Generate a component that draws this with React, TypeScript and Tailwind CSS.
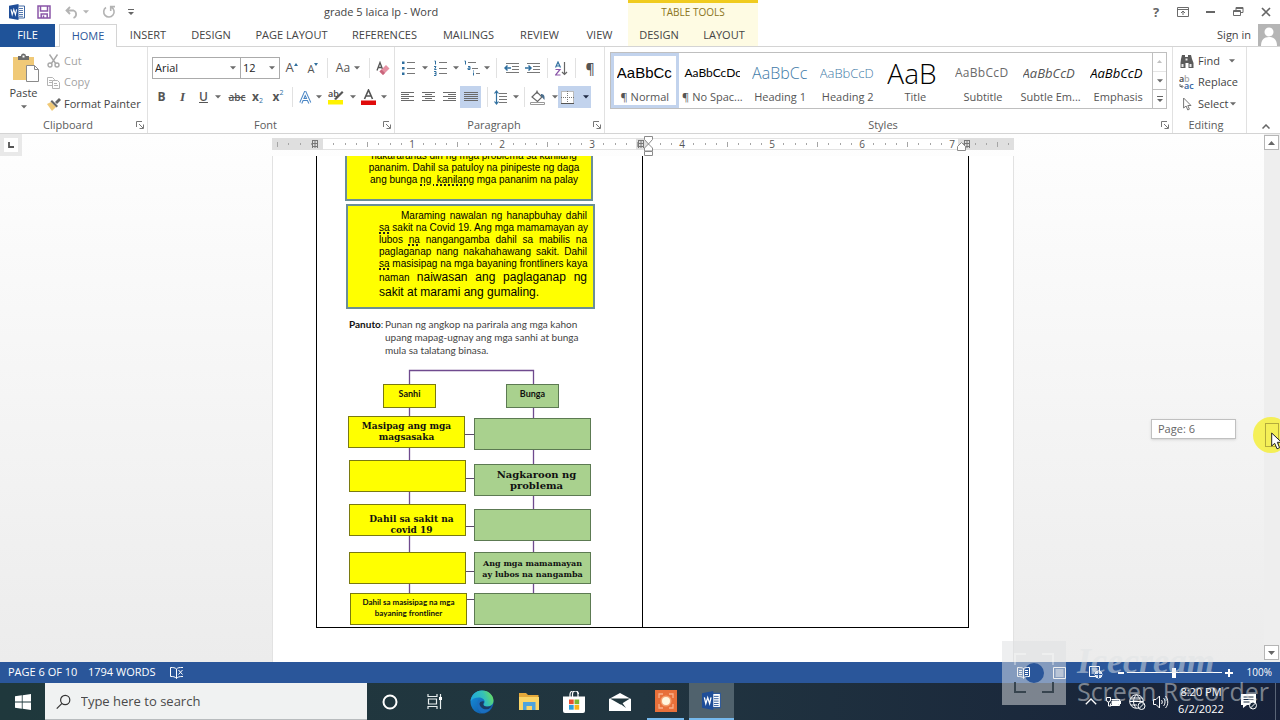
import React from "react";

const UI = "font-['Open_Sans','Noto_Sans',sans-serif]";

function Caret({ dark = false }: { dark?: boolean }) {
  return (
    <svg width="6" height="4" viewBox="0 0 6 4" aria-hidden="true" className="shrink-0">
      <path d="M0 0.3h6L3 3.6z" fill={dark ? "#1f2a44" : "#6b6b6b"} />
    </svg>
  );
}

function Tool({ label, w, children, on = false }: { label: string; w: string; children: React.ReactNode; on?: boolean }) {
  return (
    <button
      type="button"
      aria-label={label}
      className={`flex h-[22px] shrink-0 items-center justify-center text-[#555] ${w} ${on ? "bg-[#c2d3ed]" : ""}`}
    >
      {children}
    </button>
  );
}

function Sep({ w = "w-3" }: { w?: string }) {
  return (
    <span className={`flex h-5 shrink-0 justify-center ${w}`}>
      <span className="w-px bg-[#e1e1e1]" />
    </span>
  );
}

function Group({ title, w, launcher = true, children }: { title: string; w: string; launcher?: boolean; children: React.ReactNode }) {
  return (
    <section aria-label={title} className={`flex flex-col border-r border-[#e1e1e1] ${w}`}>
      <div className="min-h-0 flex-1">{children}</div>
      <div className="flex h-4 items-center pr-[3px]">
        <span className={`flex-1 text-center text-[11px] text-[#5c5c5c] ${launcher ? "" : "pr-1"}`}>{title}</span>
        {launcher && (
          <button type="button" aria-label={`${title} settings`}>
            <svg width="8" height="8" viewBox="0 0 8 8" fill="none" stroke="#777">
              <path d="M0.5 6V0.5H6M3 3l4 4M7.5 3.5v4h-4" />
            </svg>
          </button>
        )}
      </div>
    </section>
  );
}

function Lines({ rows }: { rows: [number, number][] }) {
  return (
    <svg width="14" height="12" viewBox="0 0 14 12" stroke="#6a6a6a" strokeWidth="1">
      {rows.map(([a, b], i) => (
        <path key={i} d={`M${a} ${1.5 + i * 2}H${b}`} />
      ))}
    </svg>
  );
}

function WordLogo({ size }: { size: number }) {
  return (
    <svg width={size} height={size} viewBox="0 0 16 16" aria-hidden="true">
      <path d="M8 2h7.5v12H8z" fill="#fff" stroke="#2b579a" strokeWidth="0.9" />
      <path d="M10 4.5h4M10 6.5h4M10 8.5h4M10 10.5h4M10 12.3h4" stroke="#2b579a" strokeWidth="0.8" />
      <path d="M0 1.8 9.5 0v16L0 14.2z" fill="#1f4e99" />
      <path d="M2 5.4 3.2 10.6 4.8 5.6 6.4 10.6 7.6 5.4" fill="none" stroke="#fff" strokeWidth="1.1" />
    </svg>
  );
}

const tabs: [string, string][] = [
  ["INSERT", "w-[62px]"],
  ["DESIGN", "w-[64px]"],
  ["PAGE LAYOUT", "w-[97px]"],
  ["REFERENCES", "w-[89px]"],
  ["MAILINGS", "w-[79px]"],
  ["REVIEW", "w-[63px]"],
  ["VIEW", "w-[57px]"],
];

function TitleBar() {
  return (
    <div className="flex h-6 items-stretch">
      <div className="flex w-[324px] items-center pl-[9px]">
        <WordLogo size={16} />
        <button type="button" aria-label="Save" className="ml-3">
          <svg width="14" height="14" viewBox="0 0 14 14" fill="none" stroke="#8a55a8" strokeWidth="1.5">
            <path d="M1 1h12v12H1zM3.5 1v5h7V1M4.2 13V9h6v4M6.5 10.500v2" />
          </svg>
        </button>
        <button type="button" aria-label="Undo" className="ml-[14px] flex items-center gap-1">
          <svg width="14" height="13" viewBox="0 0 14 13" fill="none" stroke="#b3b3b3" strokeWidth="1.8">
            <path d="M5 1 1.500 4.500 5 8M2 4.500h6.500a4 4 0 0 1 0 7.500" />
          </svg>
          <span className="opacity-50"><Caret /></span>
        </button>
        <button type="button" aria-label="Repeat" className="ml-[13px]">
          <svg width="14" height="14" viewBox="0 0 14 14" fill="none" stroke="#b3b3b3" strokeWidth="1.6">
            <path d="M4 2.500A5.200 5.200 0 1 0 9.500 2.300M8.700 6V1.600h4.300" />
          </svg>
        </button>
        <button type="button" aria-label="Customize Quick Access Toolbar" className="ml-3">
          <svg width="6" height="7" viewBox="0 0 6 7" fill="#666">
            <path d="M0 0h6v1H0zM0 3h6L3 6z" />
          </svg>
        </button>
      </div>
      <h1 className="w-[304px] self-center text-[11px] text-[#444]">grade 5 laica lp - Word</h1>
      <div className="w-[130px] border-t-[3px] border-[#f0cb1f] bg-[#fefbe3] pt-px text-center text-[10px] leading-4 text-[#8a7420]">
        TABLE TOOLS
      </div>
      <div className="flex flex-1 items-center justify-end pr-[9px] text-[#666]">
        <button type="button" aria-label="Help" className="w-5 text-[13px] font-bold leading-4">?</button>
        <button type="button" aria-label="Ribbon Display Options" className="ml-[11px]">
          <svg width="12" height="10" viewBox="0 0 12 10" fill="none" stroke="#6b6b6b">
            <path d="M0.500 0.500h11v9h-11zM0.500 2.500h11M6 8V4.500M4 6l2-2 2 2" />
          </svg>
        </button>
        <button type="button" aria-label="Minimize" className="ml-[17px] h-[2px] w-[9px] bg-[#666]" />
        <button type="button" aria-label="Restore Down" className="ml-[18px]">
          <svg width="11" height="10" viewBox="0 0 11 10" fill="none" stroke="#6b6b6b">
            <path d="M0.500 3.500h7v5h-7zM0.500 4.500h7M3 3V0.500h7v5H8M3 1.500h7" />
          </svg>
        </button>
        <button type="button" aria-label="Close" className="ml-[17px]">
          <svg width="10" height="10" viewBox="0 0 10 10" fill="none" stroke="#666" strokeWidth="1.7">
            <path d="M1 1l8 8M9 1 1 9" />
          </svg>
        </button>
      </div>
    </div>
  );
}

function TabBar() {
  return (
    <nav aria-label="Ribbon tabs" className="flex h-[23px] items-stretch text-[11px] text-[#444]">
      <button type="button" className="w-[55px] bg-[#1f5399] text-white">FILE</button>
      <span className="w-1 border-b border-[#d4d4d4]" />
      <button type="button" className="w-[58px] border border-b-0 border-[#d4d4d4] bg-white text-[#2b579a]">HOME</button>
      {tabs.map(([t, w]) => (
        <button key={t} type="button" className={`border-b border-[#d4d4d4] ${w}`}>{t}</button>
      ))}
      <button type="button" className="w-[62px] border-b border-[#d4d4d4] bg-[#fefbe3]">DESIGN</button>
      <button type="button" className="w-[68px] border-b border-[#d4d4d4] bg-[#fefbe3]">LAYOUT</button>
      <div className="flex flex-1 items-center justify-end border-b border-[#d4d4d4]">
        <a href="#signin" className="mr-[7px]">Sign in</a>
        <svg width="22" height="22" viewBox="0 0 22 22" aria-hidden="true">
          <path d="M0 0h22v22H0z" fill="#b5b5b5" />
          <circle cx="11" cy="8" r="4.500" fill="#fff" />
          <path d="M3 22c0-6 3-9 8-9s8 3 8 9z" fill="#fff" />
        </svg>
      </div>
    </nav>
  );
}

function ClipboardGroup() {
  return (
    <Group title="Clipboard" w="w-[148px]">
      <div className="flex">
        <button type="button" className="flex w-[47px] flex-col items-center pt-[6px] text-[11px] leading-4 text-[#444]">
          <svg width="28" height="30" viewBox="0 0 28 30" aria-hidden="true" className="ml-1">
            <path d="M1 4h21v23H1z" fill="#f0c977" />
            <path d="M6 3h3a2.500 2.500 0 0 1 5 0h3v4H6z" fill="#6b6b6b" />
            <path d="M10.500 2.500h2v2h-2z" fill="#fff" />
            <path d="M14.500 12.500h8l4 4v12h-12z" fill="#fff" stroke="#8a8a8a" />
            <path d="M22.500 12.500v4h4" fill="none" stroke="#8a8a8a" />
          </svg>
          <span className="mb-1 mt-[2px]">Paste</span>
          <Caret />
        </button>
        <div className="flex flex-col pt-[3px] text-[11px]">
          <button type="button" className="flex h-[22px] items-center gap-1 text-[#a3a3a3]">
            <svg width="13" height="14" viewBox="0 0 13 14" fill="none" stroke="#a8a8a8" strokeWidth="1.400">
              <path d="M2.500 0.500 9 10M10.500 0.500 4 10" />
              <circle cx="3" cy="11" r="2" />
              <circle cx="10" cy="11" r="2" />
            </svg>
            Cut
          </button>
          <button type="button" className="flex h-[21px] items-center gap-1 text-[#a3a3a3]">
            <svg width="13" height="12" viewBox="0 0 13 12" fill="#fff" stroke="#b3b3b3">
              <path d="M0.500 0.500h5l2 2v6h-7zM2 3.500h3M2 5.500h3" />
              <path d="M5.500 3.500h5l2 2v6h-7zM7 6.500h3M7 8.500h4" />
            </svg>
            Copy
          </button>
          <button type="button" className="flex h-[22px] items-center gap-[3px] text-[#444]">
            <svg width="14" height="13" viewBox="0 0 14 13" aria-hidden="true">
              <path d="M0 6 4 4l5 5-4 4z" fill="#f0c977" />
              <path d="M5 2l6 6-1.500 1.500-6-6z" fill="#666" />
              <path d="M8 4l4-4 2 2-4 4z" fill="#666" />
            </svg>
            Format Painter
          </button>
        </div>
      </div>
    </Group>
  );
}

function FontGroup() {
  return (
    <Group title="Font" w="w-[247px]">
      <div className="mt-[10px] flex h-[22px] items-center pl-1 text-[12px]">
        <label className="flex h-[22px] w-[89px] items-center border border-[#ababab] pr-1">
          <input aria-label="Font" defaultValue="Arial" className="w-full min-w-0 pl-[2px] text-[11px] text-[#222] outline-none" />
          <Caret />
        </label>
        <label className="-ml-px flex h-[22px] w-10 items-center border border-[#ababab] pr-1">
          <input aria-label="Font Size" defaultValue="12" className="w-full min-w-0 pl-[2px] text-[11px] text-[#222] outline-none" />
          <Caret />
        </label>
        <Tool label="Increase Font Size" w="w-[23px]">
          <span className="text-[13px]">A</span>
          <svg width="4" height="10" viewBox="0 0 4 10"><path d="M0 3h4L2 0z" fill="#2f6f9f" /></svg>
        </Tool>
        <Tool label="Decrease Font Size" w="w-[20px]">
          <span className="pt-[2px] text-[11px]">A</span>
          <svg width="4" height="10" viewBox="0 0 4 10"><path d="M0 0h4L2 3z" fill="#2f6f9f" /></svg>
        </Tool>
        <Sep w="w-2" />
        <Tool label="Change Case" w="w-[34px]"><span className="mr-1">Aa</span><Caret /></Tool>
        <Sep w="w-2" />
        <Tool label="Clear All Formatting" w="w-[20px]">
          <svg width="14" height="15" viewBox="0 0 14 15">
            <path d="M1 9.500 4 1.500 7 9.500M2 6.500h4" fill="none" stroke="#555" strokeWidth="1.300" />
            <path d="M3.500 10.500 10 4l3.500 3.500L7 14z" fill="#e590a2" />
            <path d="M3.500 10.500 5.500 8.500 9 12l-2 2z" fill="#c9667c" />
          </svg>
        </Tool>
      </div>
      <div className="mt-[7px] flex items-center pl-[3px] text-[12px]">
        <Tool label="Bold" w="w-[21px]"><b>B</b></Tool>
        <Tool label="Italic" w="w-[21px]"><i className="font-['Liberation_Serif',serif] text-[13px] font-bold">I</i></Tool>
        <Tool label="Underline" w="w-[34px]"><span className="mr-[7px] font-semibold underline">U</span><Caret /></Tool>
        <Tool label="Strikethrough" w="w-[20px]"><span className="text-[10px] font-semibold line-through">abc</span></Tool>
        <Tool label="Subscript" w="w-[21px]"><b>x</b><span className="pt-2 text-[7px] text-[#2f6f9f]">2</span></Tool>
        <Tool label="Superscript" w="w-[20px]"><b>x</b><span className="pb-2 text-[7px] text-[#2f6f9f]">2</span></Tool>
        <Sep w="w-2" />
        <Tool label="Text Effects and Typography" w="w-[29px]">
          <svg width="13" height="13" viewBox="0 0 13 13" className="mr-[4px]">
            <path d="M1.800 12 6.200 1.800 10.800 12M3.500 8.500h5.600" fill="none" stroke="#4a86c5" strokeWidth="3.200" />
            <path d="M1.800 12 6.200 1.800 10.800 12M3.500 8.500h5.600" fill="none" stroke="#fff" strokeWidth="1.200" />
          </svg>
          <Caret />
        </Tool>
        <Tool label="Text Highlight Color" w="w-[33px]">
          <svg width="17" height="16" viewBox="0 0 17 16" className="mr-[5px]">
            <text x="0" y="8" fontSize="9" fontFamily="Open Sans" fontWeight="600" fill="#444">ab</text>
            <path d="M6 10 14 2l1.500 1.500L8 11z" fill="#555" />
            <path d="M0 11h15v4.500H0z" fill="#fff200" />
          </svg>
          <Caret />
        </Tool>
        <Tool label="Font Color" w="w-[32px]">
          <svg width="15" height="16" viewBox="0 0 15 16" className="mr-[5px]">
            <path d="M3.500 10 7.500 1 11.500 10M5 7h5" fill="none" stroke="#555" strokeWidth="1.600" />
            <path d="M0 11.500h15V16H0z" fill="#e00b0b" />
          </svg>
          <Caret />
        </Tool>
      </div>
    </Group>
  );
}

function Dots({ kind }: { kind: "bullet" | "number" | "multi" }) {
  return (
    <svg width={kind === "multi" ? 16 : 13} height="16" viewBox={kind === "multi" ? "0 0 16 16" : "0 0 13 16"}>
      {kind === "bullet" && (
        <>
          <path d="M5 2.500h8M5 8.500h8M5 13.500h8" stroke="#777" />
          <path d="M0 1.500h2.500v2.500H0zM0 7h2.500v2.500H0zM0 12.500h2.500V15H0z" fill="#2f6f9f" />
        </>
      )}
      {kind === "number" && (
        <>
          <path d="M5 2.500h8M5 8.500h8M5 13.500h8" stroke="#777" />
          <path d="M0.500 1h1v3.500M0 6.500h2L0.500 9.500H2.500M0 11.500h2v4H0M0.500 13.500H2" fill="none" stroke="#2f6f9f" />
        </>
      )}
      {kind === "multi" && (
        <>
          <path d="M4 2.500h8M8 8.500h6M12 13.500h4" stroke="#777" />
          <path d="M0.500 1h1v3.500M4 6.500h2v3H4V8h2M9.500 10.500v1M9.500 12.500v3" fill="none" stroke="#2f6f9f" />
        </>
      )}
    </svg>
  );
}

function IndentIcon({ flip }: { flip: boolean }) {
  return (
    <svg width="15" height="12" viewBox="0 0 15 12" fill="none">
      <path d="M2 1.500h13M8 4.500h7M8 7.500h7M2 10.500h13" stroke="#777" />
      <path d={flip ? "M0 6h6M3.500 3.500 6 6 3.500 8.500" : "M1 6h6M3.500 3.500 1 6l2.500 2.500"} stroke="#2f6f9f" strokeWidth="1.500" />
    </svg>
  );
}

function ParagraphGroup() {
  return (
    <Group title="Paragraph" w="w-[210px]">
      <div className="mt-[10px] flex items-center pl-[5px]">
        <Tool label="Bullets" w="w-[30px]"><span className="mr-[7px]"><Dots kind="bullet" /></span><Caret /></Tool>
        <Tool label="Numbering" w="w-[32px]"><span className="mr-[6px]"><Dots kind="number" /></span><Caret /></Tool>
        <Tool label="Multilevel List" w="w-[30px]"><span className="mr-1"><Dots kind="multi" /></span><Caret /></Tool>
        <Sep w="w-2" />
        <Tool label="Decrease Indent" w="w-[22px]"><IndentIcon flip={false} /></Tool>
        <Tool label="Increase Indent" w="w-[21px]"><IndentIcon flip /></Tool>
        <Sep w="w-2" />
        <Tool label="Sort" w="w-[20px]">
          <svg width="13" height="15" viewBox="0 0 13 15" fill="none">
            <path d="M0.500 6.500 3 1l2.500 5.500M1.500 5h3" stroke="#2f6f9f" strokeWidth="1.200" />
            <path d="M0.500 8.500h4.500L0.500 14h5" stroke="#8a55a8" strokeWidth="1.200" />
            <path d="M9.500 1v12.500M7 11l2.500 2.500L12 11" stroke="#666" strokeWidth="1.200" />
          </svg>
        </Tool>
        <Sep w="w-2" />
        <Tool label="Show/Hide" w="w-[22px]"><span className="text-[14px] font-semibold">¶</span></Tool>
      </div>
      <div className="mt-[7px] flex items-center pl-[3px]">
        <Tool label="Align Left" w="w-[20px]"><Lines rows={[[0, 13], [0, 8], [0, 13], [0, 8], [0, 13]]} /></Tool>
        <Tool label="Center" w="w-[21px]"><Lines rows={[[0, 13], [3, 10], [0, 13], [3, 10], [0, 13]]} /></Tool>
        <Tool label="Align Right" w="w-[21px]"><Lines rows={[[0, 13], [5, 13], [0, 13], [5, 13], [0, 13]]} /></Tool>
        <Tool label="Justify" w="w-[21px]" on><Lines rows={[[0, 14], [0, 14], [0, 14], [0, 14], [0, 14]]} /></Tool>
        <Sep w="w-3" />
        <Tool label="Line and Paragraph Spacing" w="w-[26px]">
          <svg width="13" height="15" viewBox="0 0 13 15" fill="none" className="mr-[6px]">
            <path d="M5 3.500h8M5 6.500h8M5 9.500h8M5 12.500h8" stroke="#777" />
            <path d="M2.500 1v13M0.500 3.500 2.500 1l2 2.500M0.500 11.500 2.500 14l2-2.500" stroke="#2f6f9f" strokeWidth="1.200" />
          </svg>
          <Caret />
        </Tool>
        <Sep w="w-[10px]" />
        <Tool label="Shading" w="w-[29px]">
          <svg width="16" height="15" viewBox="0 0 16 15" fill="none" className="mr-[6px]">
            <path d="M2 7 7 2l5 5-4.500 4.500z" stroke="#666" strokeWidth="1.200" />
            <path d="M7 4V0.600" stroke="#666" strokeWidth="1.200" />
            <path d="M11 4c3 0 4 2 3.500 6C13 9 12.500 7 11 6z" fill="#4a6f8f" />
            <path d="M0.500 12.500h14v2h-14z" stroke="#999" />
          </svg>
          <Caret />
        </Tool>
        <Tool label="Borders" w="w-[33px]" on>
          <svg width="13" height="13" viewBox="0 0 13 13" className="mr-[9px]">
            <path d="M0 0h13v13H0z" fill="#fff" />
            <path d="M0.500 0.500h12v12h-12zM6.500 0v13M0 6.500h13" fill="none" stroke="#777" strokeDasharray="1 1" />
            <path d="M0 12.500h13" stroke="#555" />
          </svg>
          <Caret dark />
        </Tool>
      </div>
    </Group>
  );
}

const styles: [string, string, string][] = [
  ["¶ Normal", "AaBbCc", "text-[15px] text-black font-['Liberation_Sans',Arial,sans-serif]"],
  ["¶ No Spac...", "AaBbCcDc", "text-[12px] text-black font-['Lato',sans-serif]"],
  ["Heading 1", "AaBbCc", "text-[16px] text-[#3f7ba8] font-['Open_Sans',sans-serif] font-light"],
  ["Heading 2", "AaBbCcD", "text-[13px] text-[#3f7ba8] font-['Open_Sans',sans-serif] font-light"],
  ["Title", "AaB", "text-[28px] text-black font-['Open_Sans',sans-serif] font-light"],
  ["Subtitle", "AaBbCcD", "text-[12px] tracking-wide text-[#6a6a6a] font-['Open_Sans',sans-serif]"],
  ["Subtle Em...", "AaBbCcD", "text-[13px] text-[#555] italic font-['Open_Sans',sans-serif]"],
  ["Emphasis", "AaBbCcD", "text-[13px] text-black italic font-['Open_Sans',sans-serif]"],
];

function StylesGroup() {
  return (
    <Group title="Styles" w="min-w-0 flex-1">
      <div className="mx-[5px] mt-[5px] flex h-[57px] border border-[#bfbfbf]">
        {styles.map(([name, sample, cls], i) => (
          <button
            key={name}
            type="button"
            className={`flex min-w-0 flex-1 flex-col items-center border-[3px] text-[11px] leading-4 text-[#555] ${i === 0 ? "border-[#c2d3ed]" : "border-transparent"}`}
          >
            <span className={`flex h-[34px] w-[56px] items-center overflow-hidden whitespace-nowrap ${cls}`}>{sample}</span>
            <span className="whitespace-nowrap">{name}</span>
          </button>
        ))}
        <div className="flex w-[14px] flex-col border-l border-[#bfbfbf]">
          <button type="button" aria-label="Previous styles" className="flex flex-1 items-center justify-center border-b border-[#bfbfbf] opacity-40">
            <svg width="5" height="3" viewBox="0 0 5 3"><path d="M0 3h5L2.500 0z" fill="#666" /></svg>
          </button>
          <button type="button" aria-label="Next styles" className="flex flex-1 items-center justify-center border-b border-[#bfbfbf]">
            <Caret />
          </button>
          <button type="button" aria-label="More styles" className="flex flex-1 items-center justify-center">
            <svg width="6" height="7" viewBox="0 0 6 7" fill="#666"><path d="M0 0h6v1H0zM0 3h6L3 6z" /></svg>
          </button>
        </div>
      </div>
    </Group>
  );
}

function EditingGroup() {
  return (
    <Group title="Editing" w="w-[74px]" launcher={false}>
      <div className="flex flex-col pl-[6px] pt-[3px] text-[11px] text-[#444]">
        <button type="button" className="flex h-[22px] items-center">
          <svg width="15" height="13" viewBox="0 0 15 13" fill="#5a5a5a" className="mr-[4px]">
            <path d="M3 0h3v2h3V0h3l1 4 1.500 4v5h-5V8h-3v5h-5V8L2 4z" />
            <path d="M2.500 9h2v3h-2zM10.500 9h2v3h-2zM6.500 3.500h2v2h-2z" fill="#e8e8e8" />
          </svg>
          <span className="mr-[9px]">Find</span>
          <Caret />
        </button>
        <button type="button" className="flex h-[21px] items-center">
          <svg width="16" height="15" viewBox="0 0 16 15" className="mr-[3px]" fontFamily="Open Sans" fontSize="9" fontWeight="600">
            <text x="0" y="7" fill="#444">a</text>
            <text x="5" y="7" fill="#aaa">b</text>
            <text x="5" y="14" fill="#2f5f9f">ac</text>
            <path d="M1 9v2.500h2.500M2.500 10l1.500 1.500L2.500 13" fill="none" stroke="#666" />
          </svg>
          Replace
        </button>
        <button type="button" className="flex h-[22px] items-center">
          <svg width="9" height="14" viewBox="0 0 9 14" fill="#fff" stroke="#777" className="ml-[4px] mr-[6px]">
            <path d="M0.600 1v10l2.500-2 1.700 4 1.600-.8L4.800 8.500H8z" />
          </svg>
          <span className="mr-[2px]">Select</span>
          <Caret />
        </button>
      </div>
    </Group>
  );
}

function Ribbon() {
  return (
    <div className="flex h-[87px] border-b border-[#d4d4d4] bg-white">
      <ClipboardGroup />
      <FontGroup />
      <ParagraphGroup />
      <StylesGroup />
      <EditingGroup />
      <div className="flex w-[33px] items-end justify-center pb-1 pl-1">
        <button type="button" aria-label="Collapse the Ribbon">
          <svg width="8" height="5" viewBox="0 0 8 5" fill="none" stroke="#666" strokeWidth="1.500"><path d="M0.500 4.500 4 1l3.500 3.500" /></svg>
        </button>
      </div>
    </div>
  );
}

function GridMark({ x }: { x: number }) {
  return (
    <path
      d={`M${x + 0.5} 2v8M${x + 3} 2v8M${x + 5.5} 2v8M${x} 2.500h6M${x} 5.500h6M${x} 8.500h6`}
      stroke="#777"
      fill="none"
    />
  );
}

function Ruler() {
  const ticks = Array.from({ length: 66 }, (_, i) => i - 4).filter((n) => n % 8 !== 0);
  return (
    <svg width="742" height="14" viewBox="0 0 742 14" className="overflow-visible" role="img" aria-label="Ruler">
      <path d="M0 0h742v12H0z" fill="#fff" />
      <path d="M0 0h51v12H0zM364 0h13v12h-13zM686 0h56v12h-56z" fill="#dfdfdf" />
      <path d="M51 0.500h313M377 0.500h309M51 11.500h313M377 11.500h309" stroke="#e3e3e3" />
      {ticks.map((n) => {
        const x = Math.round(50 + n * 11.25);
        const half = n % 4 === 0;
        return <path key={n} d={half ? `M${x + 0.5} 4v5` : `M${x + 0.5} 5v2`} stroke="#a5a5a5" />;
      })}
      {[1, 2, 3, 4, 5, 6, 7].map((n) => (
        <text key={n} x={50 + n * 90} y="10" textAnchor="middle" fontSize="10" fontFamily="Open Sans" fill="#555">{n}</text>
      ))}
      <GridMark x={40} />
      <GridMark x={366} />
      <GridMark x={692} />
      <path d="M372.500 -1.500h8v3L376.500 6l-4-4.500zM376.500 6l4 4v3h-8v-3zM372.500 13.500h8v4h-8z" fill="#fff" stroke="#8a8a8a" />
      <path d="M685.500 12.500v-4l4-4 4 4v4z" fill="#fff" stroke="#8a8a8a" />
    </svg>
  );
}

function Wavy({ children }: { children: React.ReactNode }) {
  return <span className="underline decoration-[#222] decoration-dotted decoration-2">{children}</span>;
}

type Node = { box: string; fill: string; text?: string[]; cls?: string };

const serif = "font-['DejaVu_Serif',serif] font-bold";
const Y = "bg-[#ffff00] border-[#7a7a10]";
const G = "bg-[#a9d18e] border-[#5c7a52]";

const nodes: Node[] = [
  { box: "left-[38px] top-[19px] h-[24px] w-[53px]", fill: Y, text: ["Sanhi"], cls: "pb-[5px] text-[9px] font-bold font-['Lato',sans-serif]" },
  { box: "left-[161px] top-[19px] h-[24px] w-[53px]", fill: G, text: ["Bunga"], cls: "pb-[5px] text-[9px] font-bold font-['Lato',sans-serif]" },
  { box: "left-[3px] top-[51px] h-[32px] w-[117px]", fill: Y, text: ["Masipag ang mga", "magsasaka"], cls: `text-[9px] ${serif}` },
  { box: "left-[129px] top-[53px] h-[32px] w-[117px]", fill: G },
  { box: "left-[4px] top-[95px] h-[32px] w-[117px]", fill: Y },
  { box: "left-[129px] top-[99px] h-[32px] w-[117px]", fill: G, text: ["Nagkaroon ng", "problema"], cls: `pl-2 text-[10px] ${serif}` },
  { box: "left-[4px] top-[139px] h-[32px] w-[117px]", fill: Y, text: ["Dahil sa sakit na", "covid 19"], cls: `pl-2 pt-[9px] text-[9px] ${serif}` },
  { box: "left-[129px] top-[144px] h-[32px] w-[117px]", fill: G },
  { box: "left-[4px] top-[187px] h-[32px] w-[117px]", fill: Y },
  { box: "left-[129px] top-[187px] h-[32px] w-[117px]", fill: G, text: ["Ang mga mamamayan", "ay lubos na nangamba"], cls: `pt-px text-[8px] ${serif}` },
  { box: "left-[5px] top-[228px] h-[32px] w-[117px]", fill: Y, text: ["Dahil sa masisipag na mga", "bayaning frontliner"], cls: "pb-[2px] text-[8px] font-bold font-['Lato',sans-serif]" },
  { box: "left-[129px] top-[228px] h-[32px] w-[117px]", fill: G },
];

function CauseEffectDiagram() {
  return (
    <div className="relative mt-2 h-[262px]">
      <svg width="250" height="262" viewBox="0 0 250 262" className="absolute left-0 top-0" fill="none" aria-hidden="true">
        <path d="M64.500 230V5.500h124v224.500" stroke="#6f4a8e" strokeWidth="1.300" />
        <path d="M118 69.500h14M118 113.500h14M118 161.500h14M118 206.500h14M118 234.500h14" stroke="#5a4a6a" />
      </svg>
      {nodes.map((n, i) => (
        <div key={i} className={`absolute flex flex-col items-center justify-center whitespace-nowrap border leading-[11px] text-[#111] ${n.box} ${n.fill} ${n.cls ?? ""}`}>
          {n.text?.map((t) => <span key={t}>{t}</span>)}
        </div>
      ))}
    </div>
  );
}

function Passage() {
  const line = "block [text-align-last:justify]";
  return (
    <div className="pl-[28px] text-black">
      <div className="-mt-2 w-[248px] whitespace-nowrap border-2 border-[#6b8f96] bg-[#ffff00] pb-[13px] pl-[10px] text-center font-['Liberation_Sans',Arial,sans-serif] text-[10px] leading-3">
        nakararanas din ng mga problema sa kanilang
        <br />
        pananim. Dahil sa patuloy na pinipeste ng daga
        <br />
        ang bunga <Wavy>ng&nbsp; kanilang</Wavy> mga pananim na palay
      </div>
      <div className="ml-px mt-[3px] w-[249px] whitespace-nowrap border-2 border-[#6b8f96] bg-[#ffff00] pb-[7px] pl-[31px] pr-[6px] pt-1 font-['Liberation_Sans',Arial,sans-serif] text-[10px] leading-3">
        <span className={`${line} pl-[22px]`}>Maraming nawalan ng hanapbuhay dahil</span>
        <span className={line}><Wavy>sa</Wavy> sakit na Covid 19. Ang mga mamamayan ay</span>
        <span className={line}>lubos <Wavy>na</Wavy> nangangamba dahil sa mabilis na</span>
        <span className={line}>paglaganap nang nakahahawang sakit. Dahil</span>
        <span className={line}><Wavy>sa</Wavy> masisipag na mga bayaning frontliners kaya</span>
        <span className={`${line} leading-[15px]`}>naman <span className="text-[12px]">naiwasan ang paglaganap ng</span></span>
        <span className="block text-[12px] leading-[15px]">sakit at marami ang gumaling.</span>
      </div>
      <div className="mt-[9px] flex whitespace-nowrap pl-1 font-['Lato',sans-serif] text-[10px] leading-[13px] text-[#444]">
        <div className="w-[36px]"><b className="text-[#111]">Panuto</b>:</div>
        <div>
          Punan ng angkop na parirala ang mga kahon
          <br />
          upang mapag-ugnay ang mga sanhi at bunga
          <br />
          mula sa talatang binasa.
        </div>
      </div>
      <CauseEffectDiagram />
    </div>
  );
}

function ScrollBar() {
  const btn = "flex h-[15px] w-[15px] items-center justify-center border border-[#b5b5b5] bg-white";
  return (
    <div className="relative flex w-4 shrink-0 flex-col items-start bg-[#eeeeee] pb-[2px] pt-px">
      <button type="button" aria-label="Scroll up" className={btn}>
        <svg width="7" height="4" viewBox="0 0 7 4"><path d="M0 4h7L3.500 0z" fill="#666" /></svg>
      </button>
      <div className="relative w-full flex-1">
        <span className="absolute -left-[11px] top-[calc(57%+3px)] h-[36px] w-[36px] -translate-y-1/2 rounded-full bg-[#f5ee3c]/85" />
        <span className="absolute left-px top-[calc(57%+3px)] h-[24px] w-[14px] -translate-y-1/2 border border-[#b3ab3c]" />
        <svg width="12" height="18" viewBox="0 0 12 18" className="absolute left-[7px] top-[57%]" aria-hidden="true">
          <path d="M0.700 1v13l3-2.700 2.300 5.500 2.600-1.100-2.300-5.400h4.200z" fill="#fff" stroke="#222" />
        </svg>
        <span role="tooltip" className="absolute right-[44px] top-[calc(57%+3px)] flex h-[20px] w-[85px] -translate-y-4 items-center whitespace-nowrap border border-[#c0c0c0] bg-white pl-[6px] text-[11px] text-[#666] shadow-sm">
          Page: 6
        </span>
      </div>
      <button type="button" aria-label="Scroll down" className={btn}>
        <svg width="7" height="4" viewBox="0 0 7 4"><path d="M0 0h7L3.500 4z" fill="#666" /></svg>
      </button>
    </div>
  );
}

function Workspace() {
  return (
    <div className="flex min-h-0 flex-1">
      <div className="flex min-w-0 flex-1 flex-col bg-gradient-to-b from-[#fefefe] to-[#ececec]">
        <div className="flex h-[22px] shrink-0">
          <div className="flex w-[22px] items-center justify-center bg-[#e9e9e9]">
            <button type="button" aria-label="Tab selector" className="flex h-[14px] w-[14px] items-center justify-center bg-white">
              <svg width="6" height="6" viewBox="0 0 6 6"><path d="M1 0v5h5" fill="none" stroke="#555" strokeWidth="1.800" /></svg>
            </button>
          </div>
          <div className="flex flex-1 justify-center pt-1"><Ruler /></div>
        </div>
        <main className="flex min-h-0 flex-1 justify-center overflow-hidden pl-[22px]">
          <article className="w-[742px] overflow-hidden border-x border-[#e2e2e2] bg-white pl-[43px]">
            <table className="border-separate border-spacing-0 border-b border-l border-black">
              <tbody>
                <tr>
                  <td className="w-[326px] border-r border-black p-0 align-top"><Passage /></td>
                  <td className="w-[326px] border-r border-black p-0" />
                </tr>
              </tbody>
            </table>
          </article>
        </main>
      </div>
      <ScrollBar />
    </div>
  );
}

function StatusBar() {
  return (
    <footer className="flex h-[21px] shrink-0 items-center bg-[#2a569a] px-2 text-[11px] text-white">
      <span className="w-[80px]">PAGE 6 OF 10</span>
      <span className="w-[82px]">1794 WORDS</span>
      <button type="button" aria-label="Proofing errors">
        <svg width="14" height="12" viewBox="0 0 14 12" fill="none" stroke="#fff">
          <path d="M6.500 2v9.500M6.500 2C5 0.500 3 0.500 0.500 0.500v9c2.500 0 4.500 0 6 2 1-1.500 2.500-2 6.500-2M6.500 2C8 0.500 9 0.500 13 0.500M8.500 3l4 4.500M12.500 3l-4 4.500" />
        </svg>
      </button>
      <span className="flex-1" />
      <button type="button" aria-label="Read Mode" className="mr-[23px]">
        <svg width="13" height="12" viewBox="0 0 13 12" fill="none" stroke="#fff">
          <path d="M6.500 1.500v10M6.500 1.500C5 .5 3 .5.500.500v9c2.500 0 4.500 0 6 1.500 1.500-1.500 3.500-1.500 6-1.500v-9c-2.500 0-4.500 0-6 1M2 3.500h3M2 5.500h3M2 7.500h3M8 3.500h3M8 5.500h3M8 7.500h3" />
        </svg>
      </button>
      <button type="button" aria-label="Print Layout" className="mr-[23px]">
        <svg width="13" height="12" viewBox="0 0 13 12" fill="none" stroke="#fff"><path d="M.5.500h12v11H.500zM2.500 3h8M2.500 5h8M2.500 7h8M2.500 9h8" /></svg>
      </button>
      <button type="button" aria-label="Web Layout" className="mr-[15px]">
        <svg width="14" height="13" viewBox="0 0 14 13" fill="none" stroke="#fff"><path d="M10.500 5V.500H.500v10H6M2.500 3h6M2.500 5h5M2.500 7h3" /><circle cx="9.500" cy="8.500" r="3.500" fill="#cfdcf0" /><path d="M6 8.500h7M9.500 5v7" stroke="#2a569a" /></svg>
      </button>
      <button type="button" aria-label="Zoom Out" className="mr-[3px] h-[2px] w-[6px] bg-white" />
      <input
        type="range"
        aria-label="Zoom"
        min="0"
        max="100"
        defaultValue="50"
        className="h-3 w-[95px] appearance-none bg-[linear-gradient(#fff,#fff)] bg-[length:100%_1px] bg-center bg-no-repeat [&::-webkit-slider-thumb]:h-[10px] [&::-webkit-slider-thumb]:w-[4px] [&::-webkit-slider-thumb]:appearance-none [&::-webkit-slider-thumb]:bg-white"
      />
      <button type="button" aria-label="Zoom In" className="ml-[3px] mr-[14px]">
        <svg width="8" height="8" viewBox="0 0 8 8" stroke="#fff" strokeWidth="2"><path d="M0 4h8M4 0v8" /></svg>
      </button>
      <span className="text-[10px]">100%</span>
    </footer>
  );
}

function TaskButton({ label, w, children, state = "" }: { label: string; w: string; children: React.ReactNode; state?: string }) {
  return (
    <button type="button" aria-label={label} className={`flex h-full shrink-0 items-center justify-center ${w} ${state}`}>
      {children}
    </button>
  );
}

function TaskBar() {
  return (
    <div className="flex h-[37px] shrink-0 items-stretch bg-gradient-to-r from-[#1f383c] via-[#213540] to-[#172139]">
      <TaskButton label="Start" w="w-[45px]">
        <svg width="16" height="16" viewBox="0 0 16 16" fill="#fff"><path d="M0 2.200 6.800 1.300v6.300H0zM7.600 1.200 16 0v7.600H7.600zM0 8.400h6.800v6.300L0 13.800zM7.600 8.400H16V16l-8.400-1.200z" /></svg>
      </TaskButton>
      <label className="flex w-[322px] items-center border-b border-[#b8bcbe] bg-[#f0f2f2] pl-[11px] pt-px">
        <svg width="16" height="16" viewBox="0 0 16 16" fill="none" stroke="#333" strokeWidth="1.300"><circle cx="10" cy="5.800" r="5" /><path d="M6.500 9.500.800 15.200" /></svg>
        <input aria-label="Search" placeholder="Type here to search" className="ml-[10px] w-full min-w-0 bg-transparent pt-px text-[13px] text-[#444] outline-none placeholder:text-[#4a4a4a]" />
      </label>
      <TaskButton label="Cortana" w="w-[45px]">
        <svg width="16" height="16" viewBox="0 0 16 16" fill="none" stroke="#fff" strokeWidth="2"><circle cx="8" cy="8" r="6.500" /></svg>
      </TaskButton>
      <TaskButton label="Task View" w="w-[45px]">
        <svg width="16" height="15" viewBox="0 0 16 15" fill="none" stroke="#e8eeee" strokeWidth="1.200"><path d="M1 0v2.500h9V0M1.500 5h8v5h-8zM1 15v-2.500h9V15M13.500 0v15" /><path d="M12 3h3v3h-3z" fill="#fff" stroke="none" /></svg>
      </TaskButton>
      <TaskButton label="Microsoft Edge" w="w-[50px]">
        <svg width="24" height="24" viewBox="0 0 24 24">
          <defs>
            <linearGradient id="edgeTop" x1="0" y1="0.600" x2="1" y2="0.300"><stop offset="0" stopColor="#1fa5e0" /><stop offset="0.600" stopColor="#35c1b8" /><stop offset="1" stopColor="#6bdd5a" /></linearGradient>
            <linearGradient id="edgeLow" x1="0" y1="0" x2="1" y2="1"><stop offset="0" stopColor="#1793df" /><stop offset="1" stopColor="#0f4f9e" /></linearGradient>
          </defs>
          <circle cx="12" cy="12" r="11.500" fill="url(#edgeLow)" />
          <path d="M.6 11.500C1 5 6 .5 12 .5c7 0 11.500 5 11.500 10 0 4-3 6-6.500 6-2.500 0-4-1-3.300-2.200.6-1 .9-1.600.9-2.600 0-2.300-2.600-4.200-5.800-4.200C5 7.500 1.800 9 .6 11.500z" fill="url(#edgeTop)" />
          <path d="M14 11.500c0 1-.8 1.800-.8 2.800 0 1.700 2.500 2.600 5 2.300 1.300-.1 2.700-.8 3.600-1.300-2 4-6 6-9.500 5.300-3.500-1-4.800-4.500-3.300-7 1.200-2 3-2.600 5-2.100z" fill="#1b3b63" />
          <path d="M9 9.500c-3 3-2.500 9 2.500 13.500 4 .2 7.500-1.500 9.500-5-3 2-8 2-10.500-1.500C9 14.500 9.200 12 11 10.500z" fill="#1a6fc0" />
        </svg>
      </TaskButton>
      <TaskButton label="File Explorer" w="w-[43px]">
        <svg width="20" height="17" viewBox="0 0 20 17"><path d="M0 0h7l2 2h10.500v4H0z" fill="#e5a93b" /><path d="M0 4h20v13H0z" fill="#fbd567" /><path d="M4 17V9h12.500v8h-3.500v-4H7.500v4z" fill="#4ea3dc" /></svg>
      </TaskButton>
      <TaskButton label="Microsoft Store" w="w-[47px]">
        <svg width="22" height="22" viewBox="0 0 22 22"><path d="M7 6V3.500a4 4 0 0 1 8 0V6M9.500 6V3a3 3 0 0 1 6 0" fill="none" stroke="#fff" strokeWidth="1.200" /><path d="M0 5.500h22V20a2 2 0 0 1-2 2H2a2 2 0 0 1-2-2z" fill="#fff" /><path d="M6 8.500h4.700v4.700H6z" fill="#e8502f" /><path d="M11.500 8.500h4.700v4.700h-4.700z" fill="#7db82f" /><path d="M6 14h4.700v4.700H6z" fill="#2ca0dc" /><path d="M11.500 14h4.700v4.700h-4.700z" fill="#f8b517" /></svg>
      </TaskButton>
      <TaskButton label="Mail" w="w-[46px]">
        <svg width="22" height="18" viewBox="0 0 22 18"><path d="M0 6 11 0l11 6v12H0z" fill="#fff" /><path d="M1 5.500h20L11.500 11.500z" fill="#22383f" /><path d="M8 8.500 17 15l-5-7z" fill="#22383f" /></svg>
      </TaskButton>
      <TaskButton label="Icecream Screen Recorder" w="w-[37px]" state="ml-1 border-b-2 border-[#76b9ed]">
        <svg width="22" height="22" viewBox="0 0 22 22"><path d="M0 0h22v22H0z" fill="#e8703a" /><path d="M4 8V4h4M14 4h4v4M18 14v4h-4M8 18H4v-4" fill="none" stroke="#f7b08c" strokeWidth="1.300" /><circle cx="11" cy="11" r="5.500" fill="#f4a06f" /><circle cx="11" cy="11" r="4" fill="#fff6df" /></svg>
      </TaskButton>
      <TaskButton label="Word" w="w-[45px]" state="ml-[5px] border-b-2 border-[#76b9ed] bg-[#50626d]"><WordLogo size={19} /></TaskButton>
      <span className="flex-1" />
      <div className="flex items-center text-white">
        <button type="button" aria-label="Show hidden icons">
          <svg width="12" height="7" viewBox="0 0 12 7" fill="none" stroke="#fff" strokeWidth="1.300"><path d="M.8 6.200 6 1l5.200 5.200" /></svg>
        </button>
        <button type="button" aria-label="Battery" className="ml-[9px]">
          <svg width="16" height="12" viewBox="0 0 16 12" fill="none" stroke="#fff"><path d="M5.500 3.500h8v6h-9v-2M14.500 5v3" /><path d="M6 5h6.500v3.500H6z" fill="#fff" /><path d="M.5 1.500h4v2.500a2 2 0 0 1-4 0zM2.500 6v4H5" /></svg>
        </button>
        <button type="button" aria-label="Network" className="ml-[7px]">
          <svg width="17" height="16" viewBox="0 0 17 16" fill="none" stroke="#fff"><circle cx="7.500" cy="7.500" r="6.800" /><path d="M.7 7.500h13.600M7.500.7c-4 4-4 9.500 0 13.600M7.500.7c4 4 4 6 3.500 8M2 4h11M2 11h6" /><circle cx="12.500" cy="12" r="3.500" fill="#1b2a3e" /><path d="M10 14.500l5-5" /></svg>
        </button>
        <button type="button" aria-label="Volume" className="ml-[7px]">
          <svg width="16" height="14" viewBox="0 0 16 14" fill="none" stroke="#fff"><path d="M.5 4.500h2.500L6.500 1v12L3 9.500H.500zM8.500 5c1 1.200 1 2.800 0 4M10.500 3c2 2.200 2 5.800 0 8M12.500 1c3 3.200 3 8.800 0 12" /></svg>
        </button>
        <button type="button" className="ml-[5px] w-[54px] whitespace-nowrap pb-[3px] text-center text-[11px] leading-[17px]">
          <time>8:20 PM<br />6/2/2022</time>
        </button>
        <button type="button" aria-label="Notifications" className="ml-[13px]">
          <svg width="17" height="16" viewBox="0 0 17 16"><path d="M0 0h15v11H6l-4 3v-3H0z" fill="#fff" /><path d="M2.500 3h10M2.500 5.500h10M2.500 8h6" stroke="#1b2a3e" /><circle cx="12" cy="11.500" r="3.500" fill="#1b2a3e" stroke="#fff" /><path d="M9.500 14l5-5" stroke="#fff" /></svg>
        </button>
        <span className="ml-[17px] mr-1 h-[37px] w-px bg-[#5a6577]" />
      </div>
    </div>
  );
}

function Watermark() {
  return (
    <div className="pointer-events-none absolute bottom-[15px] right-[11px] flex items-end gap-[11px]" aria-label="Icecream Screen Recorder">
      <svg width="64" height="64" viewBox="0 0 64 64">
        <path fillRule="evenodd" d="M0 0h64v64H0zM32 22a10 10 0 1 0 0 20 10 10 0 1 0 0-20z" fill="#dde0e2" fillOpacity="0.5" />
        <path d="M13 24V13h11M40 13h11v11" fill="none" stroke="#fff" strokeOpacity="0.35" strokeWidth="2" />
        <path d="M24 51H13V41M51 41v10H40" fill="none" stroke="#26343f" strokeOpacity="0.8" strokeWidth="2" />
      </svg>
      <div className="text-[#dfe2e4]/50">
        <div className="whitespace-nowrap font-['Liberation_Serif',serif] text-[36px] font-bold italic leading-[32px]">Icecream</div>
        <div className="whitespace-nowrap text-[25px] leading-[28px]">Screen Recorder</div>
      </div>
    </div>
  );
}

export default function App() {
  return (
    <div className={`relative flex h-screen flex-col overflow-hidden bg-white ${UI}`}>
      <header className="shrink-0">
        <TitleBar />
        <TabBar />
        <Ribbon />
      </header>
      <Workspace />
      <StatusBar />
      <TaskBar />
      <Watermark />
    </div>
  );
}
